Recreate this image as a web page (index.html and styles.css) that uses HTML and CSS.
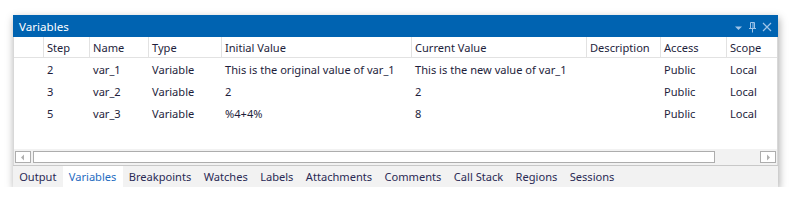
FILE: index.html
```html
<!DOCTYPE html>
<html>
<head>
<meta charset="utf-8">
<link rel="stylesheet" href="styles.css">
</head>
<body>
<div class="stage">
  <div class="panel">
    <div class="titlebar">
      <span class="title">Variables</span>
      <div class="tools">
        <svg class="ico" width="9" height="12" viewBox="0 0 9 12"><path d="M1 5.5h7L4.5 9z" fill="#9fc4e8"/></svg>
        <svg class="ico" width="9" height="12" viewBox="0 0 9 12"><path d="M2.5 1.5h4v6h-4zM1 7.5h7M4.5 7.5v4" fill="none" stroke="#9fc4e8" stroke-width="1"/><path d="M5 2v5" stroke="#9fc4e8" stroke-width="1"/></svg>
        <svg class="ico" width="10" height="12" viewBox="0 0 10 12"><path d="M1 2l8 8M9 2l-8 8" stroke="#9fc4e8" stroke-width="1.2"/></svg>
      </div>
    </div>
    <div class="grid">
      <div class="row head">
        <div class="c"></div><div class="c">Step</div><div class="c">Name</div><div class="c">Type</div><div class="c">Initial Value</div><div class="c">Current Value</div><div class="c">Description</div><div class="c">Access</div><div class="c">Scope</div>
      </div>
      <div class="row">
        <div class="c"></div><div class="c">2</div><div class="c">var_1</div><div class="c">Variable</div><div class="c">This is the original value of var_1</div><div class="c">This is the new value of var_1</div><div class="c"></div><div class="c">Public</div><div class="c">Local</div>
      </div>
      <div class="row">
        <div class="c"></div><div class="c">3</div><div class="c">var_2</div><div class="c">Variable</div><div class="c">2</div><div class="c">2</div><div class="c"></div><div class="c">Public</div><div class="c">Local</div>
      </div>
      <div class="row">
        <div class="c"></div><div class="c">5</div><div class="c">var_3</div><div class="c">Variable</div><div class="c">%4+4%</div><div class="c">8</div><div class="c"></div><div class="c">Public</div><div class="c">Local</div>
      </div>
    </div>
    <div class="hscroll">
      <div class="sbtn"><svg width="6" height="7" viewBox="0 0 6 7"><path d="M4 0.5v6L1 3.5z" fill="#b0b0b0"/></svg></div>
      <div class="thumb"></div>
      <div class="sbtn"><svg width="6" height="7" viewBox="0 0 6 7"><path d="M2 0.5v6L5 3.5z" fill="#b0b0b0"/></svg></div>
    </div>
    <div class="tabs">
      <div class="tab">Output</div>
      <div class="tab active">Variables</div>
      <div class="tab">Breakpoints</div>
      <div class="tab">Watches</div>
      <div class="tab">Labels</div>
      <div class="tab">Attachments</div>
      <div class="tab">Comments</div>
      <div class="tab">Call Stack</div>
      <div class="tab">Regions</div>
      <div class="tab">Sessions</div>
    </div>
  </div>
</div>
</body>
</html>
```

FILE: styles.css
```css
html, body {
  margin: 0;
  padding: 0;
  background: #ffffff;
}
body {
  font-family: "Noto Sans", "Open Sans", sans-serif;
  font-size: 11.1px;
  color: #1e1e3c;
}
.stage {
  padding: 15px 0 0 13px;
}
.panel {
  width: 765px;
  height: 172px;
  display: flex;
  flex-direction: column;
  background: #ffffff;
  box-shadow: 1px 3px 8px rgba(0, 0, 0, 0.35);
}
.titlebar {
  height: 22px;
  background: #0063b1;
  display: flex;
  align-items: center;
  justify-content: space-between;
  padding: 0 6px 0 6px;
}
.title {
  color: #ffffff;
  font-size: 11.6px;
}
.tools {
  display: flex;
  align-items: center;
  gap: 5px;
  padding-top: 1px;
}
.ico {
  display: block;
}
.grid {
  flex: 1;
  border-left: 1px solid #d8d8d8;
  border-right: 1px solid #d8d8d8;
}
.row {
  display: grid;
  grid-template-columns: 29px 46px 59px 73px 190px 175px 74px 66px 1fr;
  height: 22px;
  align-items: center;
}
.row.head {
  height: 20px;
  border-bottom: 1px solid #e2e2e2;
  align-items: stretch;
}
.c {
  padding-left: 4px;
  white-space: nowrap;
  overflow: hidden;
}
.head .c {
  border-left: 1px solid #e2e2e2;
  display: flex;
  align-items: center;
  padding-left: 3px;
}
.head .c:first-child {
  border-left: none;
}
.hscroll {
  height: 14px;
  background: #f2f2f2;
  display: flex;
  align-items: flex-start;
  gap: 2px;
  padding: 2px 1px 0 1px;
  border-left: 1px solid #d8d8d8;
  border-right: 1px solid #d8d8d8;
}
.sbtn {
  width: 14px;
  height: 10px;
  border: 1px solid #adadad;
  background: #ffffff;
  display: flex;
  align-items: center;
  justify-content: center;
}
.thumb {
  flex: 1;
  height: 10px;
  border: 1px solid #adadad;
  background: #ffffff;
  margin-right: 43px;
}
.tabs {
  height: 21px;
  border-top: 1px solid #c8c8c8;
  background: #f2f2f2;
  display: flex;
  padding-left: 0;
}
.tab {
  padding: 0 6.2px 0 6.2px;
  display: flex;
  align-items: center;
  color: #2a2a55;
}
.tab.active {
  background: #ffffff;
  color: #1f6cc1;
}
```
